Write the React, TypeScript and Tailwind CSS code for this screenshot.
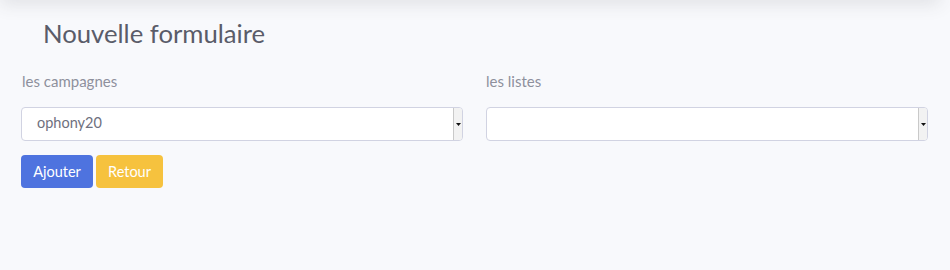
import React from "react";

const font = { fontFamily: "Lato, 'Noto Sans', sans-serif" };

function FakeSelect({ value }: { value?: string }) {
  return (
    <div className="flex h-[34px] items-stretch overflow-hidden rounded-[4px] border border-[#d1d3e2] bg-white">
      <div className="flex flex-1 items-center pb-[2px] pl-[15px] text-[14.5px] text-[#6e707e]">{value}</div>
      <div className="flex w-[9px] items-center justify-center border-l border-[#c9c9c9] bg-[#f2f2f2]">
        <svg width="5" height="3" viewBox="0 0 5 3">
          <polygon points="0,0 5,0 2.5,3" fill="#111" />
        </svg>
      </div>
    </div>
  );
}

export default function App() {
  return (
    <div className="relative h-[270px] w-[950px] overflow-hidden bg-[#f8f9fc]" style={font}>
      {/* shadow from the topbar above */}
      <div className="absolute left-0 right-[10px] top-[-20px] h-[20px] shadow-[0_4px_18px_rgba(58,59,69,0.13)]" />
      <div className="pl-[21px] pr-[22px] pt-[16px]">
        <h3 className="pl-[22px] text-[25.7px] leading-[34px] text-[#5a5c69]">Nouvelle formulaire</h3>
        <div className="mt-[21px] grid grid-cols-2 gap-x-[23px]">
          <div>
            <label className="block pl-[1px] text-[15px] leading-[20px] text-[#8e909c]">les campagnes</label>
            <div className="mt-[16px]">
              <FakeSelect value="ophony20" />
            </div>
          </div>
          <div>
            <label className="block text-[15px] leading-[20px] text-[#8e909c]">les listes</label>
            <div className="mt-[16px]">
              <FakeSelect />
            </div>
          </div>
        </div>
        <div className="mt-[14px] flex gap-[3px]">
          <button className="h-[33px] w-[72px] rounded-[4px] bg-[#4e73df] text-[14.5px] text-white">Ajouter</button>
          <button className="h-[33px] w-[67px] rounded-[4px] bg-[#f6c23e] text-[14.5px] text-white">Retour</button>
        </div>
      </div>
    </div>
  );
}
